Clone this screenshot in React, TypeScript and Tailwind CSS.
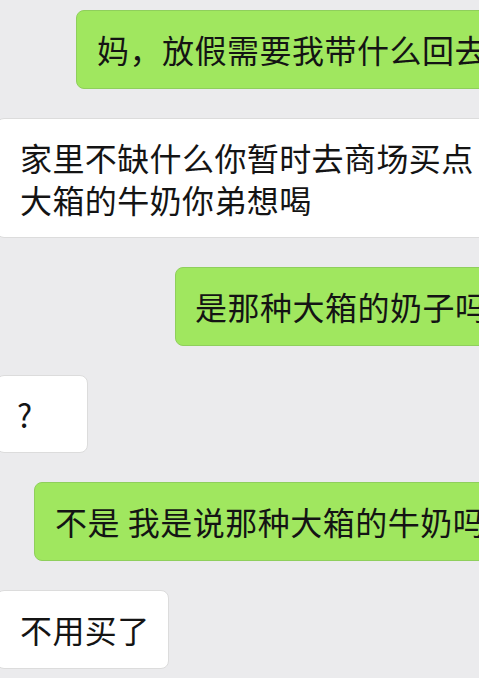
import React from "react";

const font = { fontFamily: '"Noto Sans CJK SC", "Noto Sans", sans-serif' };

function Green({ ml, text }: { ml: string; text: string }) {
  return (
    <div
      className={`${ml} shrink-0 whitespace-nowrap rounded-[8px] border border-[#8fcf5c] bg-[#a0e75f] pl-[20px] pr-[24px] py-[18px] text-[32px] leading-[41px] tracking-[0.5px] text-[#141414]`}
    >
      {text}
    </div>
  );
}

export default function App() {
  return (
    <div
      style={font}
      className="flex h-[678px] w-[479px] flex-col items-start gap-[29px] overflow-hidden bg-[#ebebed] pt-[10px]"
    >
      <div className="ml-[76px] shrink-0 whitespace-nowrap rounded-[8px] border border-[#8fcf5c] bg-[#a0e75f] pl-[20px] pr-[24px] py-[18px] text-[32px] leading-[41px] tracking-[0.5px] text-[#141414]">
        妈，放假需要我带什么回去
      </div>
      <div className="-ml-[4px] w-[492px] shrink-0 whitespace-nowrap rounded-[8px] border border-[#dcdcdc] bg-white pl-[23px] py-[17px] text-[32px] leading-[42px] tracking-[0.4px] text-[#141414]">
        家里不缺什么你暂时去商场买点
        <br />
        大箱的牛奶你弟想喝
      </div>
      <div className="ml-[175px] shrink-0 whitespace-nowrap rounded-[8px] border border-[#8fcf5c] bg-[#a0e75f] pl-[19px] pr-[24px] py-[18px] text-[32px] leading-[41px] tracking-[0.5px] text-[#141414]">
        是那种大箱的奶子吗
      </div>
      <div className="-ml-[4px] w-[92px] shrink-0 whitespace-nowrap rounded-[8px] border border-[#dcdcdc] bg-white pl-[20px] py-[18px] text-[32px] leading-[40px] text-[#141414]">
        ?
      </div>
      <div className="ml-[34px] shrink-0 whitespace-nowrap rounded-[8px] border border-[#8fcf5c] bg-[#a0e75f] pl-[20px] pr-[24px] py-[18px] text-[32px] leading-[41px] tracking-[0.5px] text-[#141414]">
        不是 我是说那种大箱的牛奶吗
      </div>
      <div className="-ml-[4px] w-[173px] shrink-0 whitespace-nowrap rounded-[8px] border border-[#dcdcdc] bg-white pl-[23px] py-[18px] text-[32px] leading-[41px] tracking-[0.4px] text-[#141414]">
        不用买了
      </div>
    </div>
  );
}
